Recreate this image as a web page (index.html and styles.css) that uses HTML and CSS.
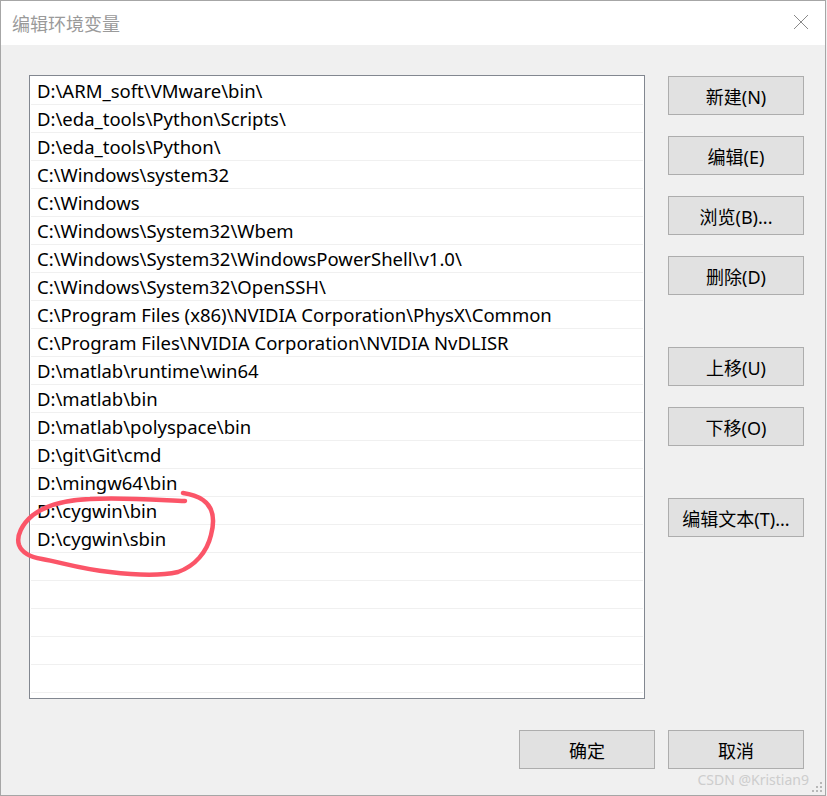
FILE: index.html
```html
<!DOCTYPE html>
<html>
<head>
<meta charset="UTF-8">
<meta name="viewport" content="width=device-width, initial-scale=1.0">
<title>编辑环境变量</title>
<link rel="stylesheet" href="styles.css">
</head>
<body>

<div class="window">
    <div class="titlebar">
        <div class="title">编辑环境变量</div>
        <svg class="close" width="16" height="16" viewBox="0 0 16 16">
            <path d="M1 1 L15 15 M15 1 L1 15" stroke="#8a8a8a" stroke-width="1" fill="none"/>
        </svg>
    </div>

    <div class="body">
        <div class="content">
            <div class="list">
                <div class="row">D:\ARM_soft\VMware\bin\</div>
                <div class="row">D:\eda_tools\Python\Scripts\</div>
                <div class="row">D:\eda_tools\Python\</div>
                <div class="row">C:\Windows\system32</div>
                <div class="row">C:\Windows</div>
                <div class="row">C:\Windows\System32\Wbem</div>
                <div class="row">C:\Windows\System32\WindowsPowerShell\v1.0\</div>
                <div class="row">C:\Windows\System32\OpenSSH\</div>
                <div class="row">C:\Program Files (x86)\NVIDIA Corporation\PhysX\Common</div>
                <div class="row">C:\Program Files\NVIDIA Corporation\NVIDIA NvDLISR</div>
                <div class="row">D:\matlab\runtime\win64</div>
                <div class="row">D:\matlab\bin</div>
                <div class="row">D:\matlab\polyspace\bin</div>
                <div class="row">D:\git\Git\cmd</div>
                <div class="row">D:\mingw64\bin</div>
                <div class="row">D:\cygwin\bin</div>
                <div class="row">D:\cygwin\sbin</div>
                <div class="row"></div>
                <div class="row"></div>
                <div class="row"></div>
                <div class="row"></div>
                <div class="row"></div>
            </div>

            <div class="side">
                <div class="button">新建(N)</div>
                <div class="button">编辑(E)</div>
                <div class="button">浏览(B)...</div>
                <div class="button">删除(D)</div>
                <div class="button group">上移(U)</div>
                <div class="button">下移(O)</div>
                <div class="button group">编辑文本(T)...</div>
            </div>
        </div>

        <div class="footer">
            <div class="button">确定</div>
            <div class="button">取消</div>
        </div>
    </div>

    <div class="watermark">CSDN @Kristian9</div>

    <svg class="grip" width="12" height="12" viewBox="0 0 12 12">
        <rect x="8" y="0" width="2" height="2" fill="#b8b8b8"/>
        <rect x="4" y="4" width="2" height="2" fill="#b8b8b8"/>
        <rect x="8" y="4" width="2" height="2" fill="#b8b8b8"/>
        <rect x="0" y="8" width="2" height="2" fill="#b8b8b8"/>
        <rect x="4" y="8" width="2" height="2" fill="#b8b8b8"/>
        <rect x="8" y="8" width="2" height="2" fill="#b8b8b8"/>
    </svg>
</div>

<!-- hand drawn mark round the cygwin rows -->
<svg class="mark" width="827" height="796" viewBox="0 0 827 796">
    <path d="M185 501 C160 500, 120 497, 90 499 C65 500, 45 506, 33 515 C22 524, 16 536, 19 545 C22 553, 30 557, 42 559 C60 562, 80 569, 110 572 C135 575, 160 576, 178 572 C195 566, 207 552, 211 535 C215 520, 213 507, 203 500 C197 496, 190 494, 183 493"
          stroke="#fb5568" stroke-width="4.5" fill="none" stroke-linecap="round" stroke-linejoin="round"/>
</svg>

</body>
</html>
```

FILE: styles.css
```css
body, html {
    margin: 0;
    padding: 0;
    background-color: #f0f0f0;
    font-family: "Noto Sans", "Noto Sans CJK SC", sans-serif;
}

.window {
    position: relative;
    width: 826px;
    height: 796px;
    box-sizing: border-box;
    border: 1px solid #a6a6a6;
    background-color: #f0f0f0;
    display: flex;
    flex-direction: column;
}

.titlebar {
    height: 44px;
    background-color: #fff;
    display: flex;
    align-items: center;
    justify-content: space-between;
    padding: 0 16px 0 11px;
}

.title {
    font-family: "Noto Sans CJK SC", sans-serif;
    font-size: 18px;
    color: #9a9a9a;
    margin-top: -1px;
}

.close {
    margin-top: -2px;
}

.body {
    flex: 1;
    display: flex;
    flex-direction: column;
    padding: 30px 21px 0 28px;
}

.content {
    display: flex;
    align-items: flex-start;
}

.list {
    width: 616px;
    height: 624px;
    box-sizing: border-box;
    border: 1px solid #828790;
    background-color: #fff;
    padding-top: 1px;
    overflow: hidden;
}

.row {
    height: 27px;
    line-height: 28px;
    margin: 0 1px;
    padding-left: 6px;
    border-bottom: 1px solid #f0f0f0;
    font-size: 18.5px;
    color: #000;
    white-space: nowrap;
}

.side {
    margin-left: 23px;
    padding-top: 1px;
    display: flex;
    flex-direction: column;
    gap: 21px;
}

.button {
    width: 136px;
    height: 39px;
    box-sizing: border-box;
    border: 1px solid #adadad;
    background-color: #e1e1e1;
    display: flex;
    align-items: center;
    justify-content: center;
    font-size: 18px;
    color: #000;
}

.side .group {
    margin-top: 31px;
}

.footer {
    display: flex;
    justify-content: flex-end;
    gap: 13px;
    margin-top: 31px;
}

.watermark {
    position: absolute;
    right: 16px;
    bottom: 6px;
    font-family: "Noto Sans", sans-serif;
    font-size: 14px;
    color: #cdcdcd;
}

.grip {
    position: absolute;
    right: 1px;
    bottom: 1px;
}

.mark {
    position: absolute;
    left: 0;
    top: 0;
    pointer-events: none;
}
```
